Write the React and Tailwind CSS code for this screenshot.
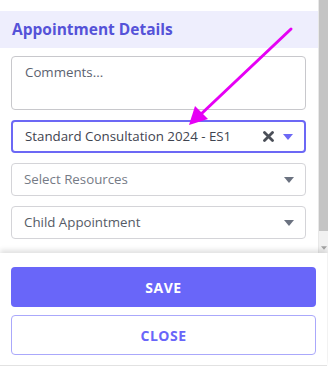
import React from 'react';

const Caret = ({ className }) => (
  <svg width="10" height="6" viewBox="0 0 10 6" className={className}>
    <path d="M0 0h10L5 6z" fill="currentColor" />
  </svg>
);

const SelectBox = ({ label, active, clearable, textClass }) => (
  <div
    className={`flex items-center h-[33px] rounded-[4px] bg-white pl-[12px] pr-[11px] ${
      active ? 'border-2 border-[#6c68f5]' : 'border border-[#d4d4d8]'
    }`}
  >
    <span className={`flex-1 text-[13.3px] ${textClass}`}>{label}</span>
    {clearable && (
      <svg width="11" height="11" viewBox="0 0 11 11" className="mr-[9px]">
        <path d="M1.5 1.5l8 8M9.5 1.5l-8 8" stroke="#4b4f58" strokeWidth="2.8" strokeLinecap="round" />
      </svg>
    )}
    <Caret className={active ? 'text-[#6c68f5]' : 'text-[#6b7280]'} />
  </div>
);

export default function App() {
  return (
    <div className="relative w-[328px] h-[366px] bg-white flex flex-col overflow-hidden" style={{ fontFamily: '"Open Sans", "Noto Sans", sans-serif' }}>
      {/* Scrolling form */}
      <div className="flex h-[253px]">
        <div className="flex-1 pt-[11px]">
          <div className="h-[37px] bg-[#eeeefd] flex items-center px-[12px]">
            <h2 className="text-[15.5px] font-bold text-[#5552d8]">Appointment Details</h2>
          </div>
          <div className="pl-[11px] pr-[12px] pt-[8px] flex flex-col gap-[10px]">
            <div className="h-[54px] rounded-[4px] border border-[#c8c8cc] px-[13px] pt-[6px] text-[13.3px] text-[#5b6270]">
              Comments...
            </div>
            <SelectBox label="Standard Consultation 2024 - ES1" active clearable textClass="text-[#3f4450]" />
            <SelectBox label="Select Resources" textClass="text-[#767b86]" />
            <SelectBox label="Child Appointment" textClass="text-[#555b66]" />
          </div>
        </div>
        {/* Scrollbar */}
        <div className="w-[10px] bg-[#f1f1f1] flex flex-col border-l border-[#e8e8e8]">
          <div className="flex-1 bg-[#c4c4c4] mb-[12px]" />
          <div className="h-[10px] flex items-center justify-center">
            <Caret className="text-[#a3a3a3] w-[6px] h-[4px]" />
          </div>
        </div>
      </div>

      {/* Footer */}
      <div className="flex-1 bg-white shadow-[0_-3px_5px_rgba(0,0,0,0.12)] pt-[14px] px-[11px] pb-[10px] flex flex-col gap-[8px] border-b border-[#e2e2e2] mr-[1px]">
        <button className="h-[40px] rounded-[4px] bg-[#6966f9] text-white text-[14px] font-bold tracking-[0.5px]">
          SAVE
        </button>
        <button className="h-[40px] rounded-[4px] border border-[#aaa8fb] bg-white text-[#6966f9] text-[14px] font-bold tracking-[0.5px]">
          CLOSE
        </button>
      </div>

      {/* Annotation arrow */}
      <svg className="absolute left-0 top-0 pointer-events-none" width="328" height="366">
        <line x1="291" y1="29" x2="199" y2="116" stroke="#e600f5" strokeWidth="3" strokeLinecap="round" />
        <polygon points="189,125 195,106 208,119" fill="#e600f5" />
      </svg>
    </div>
  );
}
